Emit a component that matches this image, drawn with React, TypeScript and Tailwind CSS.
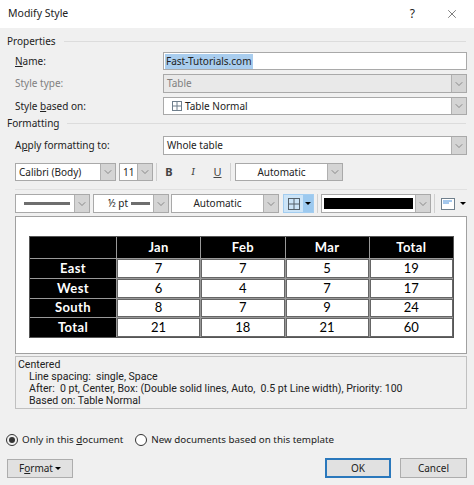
import { ChevronDown, X } from 'lucide-react';

const font = { fontFamily: '"Noto Sans", sans-serif' };

function Arrow() {
  return (
    <div className="flex h-full w-[15px] shrink-0 items-center justify-center bg-[#d4d4d4] border-l border-[#b0b0b0]">
      <ChevronDown size={12} strokeWidth={1.2} className="text-[#555]" />
    </div>
  );
}

function Select({ className, children, disabled }: { className: string; children?: React.ReactNode; disabled?: boolean }) {
  return (
    <div className={`flex items-center border border-[#a9a9a9] ${disabled ? 'bg-[#e9e9e9]' : 'bg-white'} ${className}`}>
      <div className="flex min-w-0 flex-1 items-center whitespace-nowrap px-[3px]">{children}</div>
      <Arrow />
    </div>
  );
}

function GroupLabel({ label, className }: { label: string; className: string }) {
  return (
    <div className={`flex items-center gap-2 pl-[7px] pr-[8px] text-[10px] leading-[14px] text-[#222] ${className}`}>
      <span>{label}</span>
      <div className="h-px flex-1 bg-[#dcdcdc]" />
    </div>
  );
}

function Dash({ className }: { className: string }) {
  return <div className={`h-[3px] bg-[#6e6e6e] ${className}`} />;
}

const rows = [
  ['East', '7', '7', '5', '19'],
  ['West', '6', '4', '7', '17'],
  ['South', '8', '7', '9', '24'],
  ['Total', '21', '18', '21', '60'],
];

export default function App() {
  return (
    <div className="h-[485px] w-[474px] overflow-hidden bg-[#f0f0f0] text-[#222]" style={font}>
      <div className="flex h-[28px] items-center justify-between bg-white pl-[8px] pr-[15px] text-[10.5px]">
        <span>Modify Style</span>
        <div className="flex items-center gap-[30px]">
          <span className="text-[12px]">?</span>
          <X size={14} strokeWidth={1} />
        </div>
      </div>

      <GroupLabel label="Properties" className="mt-[6px]" />
      <div className="mt-[4px] flex flex-col gap-[4px] pl-[15px] pr-[7px] text-[10px]">
        <div className="flex h-[18px] items-center">
          <span className="w-[148px]"><u>N</u>ame:</span>
          <div className="flex h-full flex-1 items-center border border-[#a9a9a9] bg-white px-[1px]">
            <span className="bg-[#a9cdee] px-[1px] leading-[15px]">Fast-Tutorials.com</span>
          </div>
        </div>
        <div className="flex h-[19px] items-center text-[#808080]">
          <span className="w-[148px]">Style type:</span>
          <Select disabled className="h-full flex-1">Table</Select>
        </div>
        <div className="flex h-[18px] items-center">
          <span className="w-[148px]">Style <u>b</u>ased on:</span>
          <Select className="h-full flex-1">
            <svg width="10" height="10" viewBox="0 0 10 10" className="ml-[5px] mr-[3px]" fill="none" stroke="#6f7f8c">
              <rect x="0.5" y="0.5" width="9" height="9" />
              <path d="M5 0.5v9M0.5 5h9" />
            </svg>
            Table Normal
          </Select>
        </div>
      </div>

      <GroupLabel label="Formatting" className="mt-[1px]" />
      <div className="mt-[6px] flex h-[19px] items-center pl-[15px] pr-[7px] text-[10px]">
        <span className="w-[148px]">A<u>p</u>ply formatting to:</span>
        <Select className="h-full flex-1">Whole table</Select>
      </div>

      <div className="mt-[8px] flex h-[18px] items-center pl-[15px] text-[10px]">
        <Select className="h-full w-[101px]">Calibri (Body)</Select>
        <Select className="ml-[3px] h-full w-[34px]">11</Select>
        <div className="ml-[3px] h-full w-px bg-[#d0d0d0]" />
        <div className="flex w-[73px] items-center text-[11px] text-[#444]">
          <span className="w-[24px] text-center font-bold">B</span>
          <span className="w-[24px] text-center italic font-serif">I</span>
          <span className="w-[25px] text-center underline">U</span>
        </div>
        <div className="h-full w-px bg-[#d0d0d0]" />
        <Select className="ml-[4px] h-full w-[108px]">
          <span className="w-full text-center">Automatic</span>
        </Select>
      </div>

      <div className="ml-[15px] mr-[7px] mt-[8px] h-px bg-[#e0e0e0]" />

      <div className="mt-[4px] flex h-[19px] items-center pl-[15px] text-[10px]">
        <Select className="h-full w-[75px]">
          <Dash className="ml-[5px] w-[46px]" />
        </Select>
        <Select className="ml-[3px] h-full w-[76px]">
          <span className="ml-[11px] mr-[3px]">½ pt</span>
          <Dash className="w-[19px]" />
        </Select>
        <Select className="ml-[2px] h-full w-[108px]">
          <span className="w-full text-center">Automatic</span>
        </Select>
        <div className="ml-[4px] flex h-full items-stretch border border-[#a3cdf0] bg-[#cce4f7]">
          <div className="flex w-[19px] items-center justify-center">
            <svg width="12" height="12" viewBox="0 0 12 12" fill="none" stroke="#55616b">
              <rect x="0.5" y="0.5" width="11" height="11" />
              <path d="M6 0.5v11M0.5 6h11" />
            </svg>
          </div>
          <div className="flex w-[10px] items-center justify-center bg-[#9cc9ef]">
            <div className="h-0 w-0 border-x-[3px] border-t-[3px] border-x-transparent border-t-black" />
          </div>
        </div>
        <div className="ml-[3px] h-full w-px bg-[#d0d0d0]" />
        <div className="ml-[3px] flex h-full w-[110px] items-center border border-[#a9a9a9] bg-white pl-[2px]">
          <div className="h-[11px] flex-1 bg-black" />
          <div className="ml-[2px] h-full"><Arrow /></div>
        </div>
        <div className="ml-[3px] h-full w-px bg-[#d0d0d0]" />
        <svg width="14" height="12" viewBox="0 0 14 12" className="ml-[6px]" fill="none">
          <rect x="0.5" y="0.5" width="13" height="11" stroke="#6f7f8c" fill="#fff" />
          <path d="M2 3h9M2 5h6" stroke="#4a90d9" />
        </svg>
        <div className="ml-[5px] h-0 w-0 border-x-[3px] border-t-[3px] border-x-transparent border-t-black" />
      </div>

      <div className="mx-[15px] mr-[7px] mt-[3px] h-[138px] border border-[#a0a0a0] bg-white pl-[13px] pt-[19px]">
        <div
          className="grid h-[102px] w-[425px] grid-cols-[86px_1fr_1fr_1fr_1fr] grid-rows-[21px_repeat(4,1fr)] gap-[1px] border border-[#555] bg-[#999] text-[13px] leading-none"
          style={{ fontFamily: 'Lato, "Open Sans", sans-serif' }}
        >
          {['', 'Jan', 'Feb', 'Mar', 'Total'].map((h, i) => (
            <div key={i} className="flex items-center justify-center bg-black font-bold tracking-[0.4px] text-white">{h}</div>
          ))}
          {rows.map((row) =>
            row.map((cell, i) => (
              <div
                key={row[0] + i}
                className={`flex items-center justify-center ${i === 0 ? 'bg-black font-bold tracking-[0.4px] text-white' : 'border border-[#666] bg-white text-black'}`}
              >
                {cell}
              </div>
            )),
          )}
        </div>
      </div>

      <div
        className="ml-[15px] mr-[7px] mt-[2px] h-[53px] border border-[#c0c0c0] px-[2px] pt-[2px] text-[10.55px] leading-[12px]"
        style={{ fontFamily: 'Roboto, sans-serif' }}
      >
        <div>Centered</div>
        <div className="pl-[11px]">Line spacing:&nbsp; single, Space</div>
        <div className="pl-[11px]">After:&nbsp; 0 pt, Center, Box: (Double solid lines, Auto,&nbsp; 0.5 pt Line width), Priority: 100</div>
        <div className="pl-[11px]">Based on: Table Normal</div>
      </div>

      <div className="mt-[24px] flex h-[14px] items-center pl-[6px] text-[10px]">
        <div className="flex h-[12px] w-[12px] items-center justify-center rounded-full border border-[#333]">
          <div className="h-[6px] w-[6px] rounded-full bg-[#333]" />
        </div>
        <span className="ml-[4px] text-[9.8px]">Only in this <u>d</u>ocument</span>
        <div className="ml-[12px] h-[12px] w-[12px] rounded-full border border-[#333] bg-white" />
        <span className="ml-[4px] text-[9.8px]">New documents based on this template</span>
      </div>

      <div className="mt-[11px] flex items-center pl-[7px] pr-[7px] text-[10px]">
        <div className="flex h-[19px] w-[66px] items-center justify-center gap-[2px] border border-[#adadad] bg-[#e1e1e1]">
          <span>F<u>o</u>rmat</span>
          <div className="h-0 w-0 border-x-[3px] border-t-[3px] border-x-transparent border-t-black" />
        </div>
        <div className="ml-auto flex h-[20px] w-[66px] items-center justify-center border-2 border-[#2a78bc] bg-[#e1e1e1]">OK</div>
        <div className="ml-[9px] flex h-[20px] w-[67px] items-center justify-center border border-[#adadad] bg-[#e1e1e1]">Cancel</div>
      </div>
    </div>
  );
}
